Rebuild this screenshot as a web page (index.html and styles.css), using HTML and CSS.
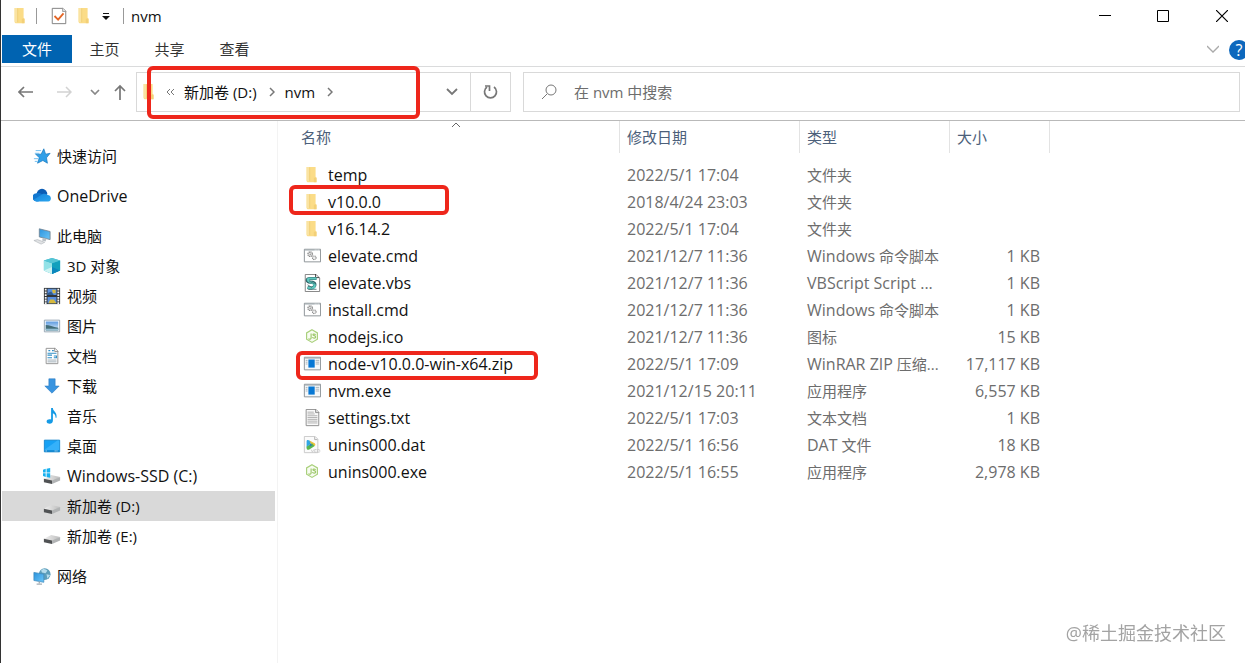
FILE: index.html
```html
<!DOCTYPE html>
<html lang="zh-CN">
<head>
  <meta charset="UTF-8">
  <title>nvm</title>
  <link rel="stylesheet" href="styles.css">
</head>
<body>
<svg class="sprite" aria-hidden="true">
  <defs>
    <linearGradient id="cloud-fill" x1="0" y1="0" x2="1" y2="1"><stop offset="0" stop-color="#1683dc"/><stop offset="1" stop-color="#2aa5ee"/></linearGradient>
    <linearGradient id="drive-fill"><stop offset="0" stop-color="#f0f0f0"/><stop offset="1" stop-color="#bdbdbd"/></linearGradient>
    <linearGradient id="screen-fill" x1="0" y1="0" x2="1" y2="1"><stop offset="0" stop-color="#2b93dd"/><stop offset="1" stop-color="#6cc6f8"/></linearGradient>
    <linearGradient id="photo-fill" x1="0" y1="0" x2="0" y2="1"><stop offset="0" stop-color="#5d9be0"/><stop offset="1" stop-color="#e4f2fb"/></linearGradient>
  </defs>
  <symbol id="folder" viewBox="0 0 20 20">
    <path d="M4 1h10v11l1 1v5H5l-1-1z" fill="#fbdc87"/>
    <path d="M4 1h3v16H5l-1-1z" fill="#fae3a2"/>
    <path d="M7 1l1 1v15H7z" fill="#f0cf78"/>
    <path d="M12 13h3v5h-3z" fill="#f3d078"/>
  </symbol>
  <symbol id="star" viewBox="0 0 20 20">
    <path d="M12 2l2 6 5-1-4 5 1 6-5-3-6 3 2-6-4-4h6z" fill="#2f9fe8" stroke="#1879bf" stroke-width=".8"/>
    <path d="M3 4h6M2 7h5M1 13h5M2 16h3" stroke="#66b9ee"/>
  </symbol>
  <symbol id="cloud" viewBox="0 0 20 20">
    <path d="M4 8a6 6 0 0 1 12 0l-6 4z" fill="#0b5db5"/>
    <path d="M4 7c4-1 6 1 9 3l-7 6H4A4.500 4.500 0 0 1 4 7z" fill="#1277cf"/>
    <path d="M9 9c3-3 7-1 7 0 5 0 5 7 1 7H4c-2 0-3-1-3-2z" fill="url(#cloud-fill)"/>
  </symbol>
  <symbol id="computer" viewBox="0 0 20 20">
    <path d="M7 2l12 3v9L7 11z" fill="url(#screen-fill)" stroke="#73818d" stroke-width=".9"/>
    <path d="M11 12l4 1-1 3-4-1z" fill="#b8bec3"/>
    <path d="M1 15l4-1 8 3-4 2z" fill="#e1e3e5" stroke="#a5abb0" stroke-width=".6"/>
  </symbol>
  <symbol id="cube" viewBox="0 0 20 20">
    <path d="M1 4l9-3 9 3v11l-9 4-9-4z" fill="#39b3cc"/>
    <path d="M1 4l9 3v12l-9-4z" fill="#93e2e7"/>
    <path d="M10 7l9-3v11l-9 4z" fill="#12a0bd"/>
    <path d="M1 4l9-3 9 3-9 3z" fill="#55c5d5"/>
    <path d="M1 15l9-4v8z" fill="#cdf3f2"/><path d="M10 11l9 4-9 4z" fill="#0b87bd"/>
  </symbol>
  <symbol id="film" viewBox="0 0 20 20">
    <path d="M1 1h18v18H1z" fill="#303438"/>
    <path d="M5 2h10v7H5zM5 11h10v7H5z" fill="#5a8fdd"/>
    <path d="M10 3h4v4h-3zM8 14h4l3 4H6z" fill="#d6b93e"/><path d="M5 7l4-2 3 4H5z" fill="#315d91"/>
    <path d="M3 2v17M17 2v17" stroke="#f5f5f5" stroke-width="2" stroke-dasharray="2 1"/>
  </symbol>
  <symbol id="picture" viewBox="0 0 20 20">
    <path d="M1.500 3.500h17v13h-17z" fill="#fff" stroke="#8fa0ae"/>
    <path d="M3 5h14v10H3z" fill="url(#photo-fill)"/>
    <path d="M3 9c4 0 8 2 14 3v3H3z" fill="#426d78"/><path d="M3 13h14v2H3z" fill="#93bed3"/>
  </symbol>
  <symbol id="document" viewBox="0 0 20 20">
    <path d="M3.500 1.500h10l3 3v14h-13z" fill="#fff" stroke="#8d8d8d"/>
    <path d="M13 1v4h4" fill="none" stroke="#8d8d8d"/>
    <path d="M6 4h2M10 4h2M5 7h10M5 9h5M12 10h3v2h-3M5 12h5" fill="none" stroke="#318fc5" stroke-width="1.200"/>
    <path d="M5 14.500h10M5 16.500h10" stroke="#9aa9b2"/>
  </symbol>
  <symbol id="download" viewBox="0 0 20 20"><path d="M6.500 2h7v8H18l-8 8-8-8h4.500z" fill="#3994e0" stroke="#2778bd" stroke-width=".6"/></symbol>
  <symbol id="music" viewBox="0 0 20 20">
    <path d="M9 1h2c0 4 5 4 4 11h-1c0-3-1-4-3-5v8c0 5-7 4-7 1 0-2 3-3 5-2z" fill="#159ae5"/>
  </symbol>
  <symbol id="desktop" viewBox="0 0 20 20">
    <path d="M1.500 3.500h17v13h-17z" fill="#17a1f4" stroke="#1385cc"/>
    <path d="M2 14L16 4h2v11H2z" fill="#35b1fa"/><path d="M2 15.500h16" stroke="#0776bb"/>
    <path d="M3 15.500h1M13 15.500h4" stroke="#fff" stroke-dasharray="1 1"/>
  </symbol>
  <symbol id="drive" viewBox="0 0 20 20">
    <path d="M1 13l8-4 10 2-9 5z" fill="url(#drive-fill)"/>
    <path d="M1 13l9 2v4l-9-2z" fill="#505254"/><path d="M10 15l9-4v4l-9 4z" fill="#b1b3b4"/>
  </symbol>
  <symbol id="system-drive" viewBox="0 0 20 20">
    <use href="#drive"/>
    <path d="M0 3l3-1v4H0zM4 2l4-1v5H4zM0 7h3v4l-3-1zM4 7h4v5l-4-1z" fill="#17b0ef"/>
  </symbol>
  <symbol id="network" viewBox="0 0 20 20">
    <circle cx="13" cy="8" r="6.500" fill="#5d9eba"/>
    <path d="M9 4c2-3 5-2 7 0l-2 3-4-1zM15 8l4 1-3 4z" fill="#b5dced"/>
    <path d="M1 6l11 2v9L1 15z" fill="url(#screen-fill)" stroke="#3f88bb" stroke-width=".8"/>
    <path d="M7 16v2m-3 1l6 0" stroke="#a7afb5" stroke-width="1.500"/>
  </symbol>
  <symbol id="script" viewBox="0 0 20 20">
    <path d="M1.500 2.500h18v14h-18z" fill="#fff" stroke="#848b90"/>
    <path d="M2 3.500h17" stroke="#a9b1b6"/><path d="M13 3.500h5" stroke="#fff" stroke-dasharray="1 1"/>
    <circle cx="8" cy="8" r="2.500" fill="#eee" stroke="#878787" stroke-width="1.500" stroke-dasharray="1.200 .6"/><circle cx="8" cy="8" r=".8" fill="#888"/>
    <circle cx="12.500" cy="12" r="2" fill="#eee" stroke="#8c8c8c" stroke-width="1.200" stroke-dasharray="1 .5"/>
  </symbol>
  <symbol id="vbs" viewBox="0 0 20 20">
    <path d="M2.500.5h12l4 4v15h-16z" fill="#fff" stroke="#777"/><path d="M14 0v4h4" fill="none" stroke="#333"/>
    <path d="M15 5H8C3 5 4 9 8 9s6 1 5 4-5 3-8 2" fill="none" stroke="#31676b" stroke-width="3.400"/>
    <path d="M15 5H8C4 5 5 8 8 9s5 1 5 4-5 3-8 2" fill="none" stroke="#5fc9bf" stroke-width="2.400"/>
    <path d="M5 12l5 3M7 8l6 3M6 17h9" stroke="#315f62" stroke-width=".8"/>
  </symbol>
  <symbol id="node" viewBox="0 0 20 20">
    <path d="M10 2l6 3.500v7L10 16l-6-3.500v-7z" fill="#f8fcf2" stroke="#a9d07b" stroke-width="1.300"/>
    <path d="M9 6v5c0 1-1 2-3 1M14 7.500c-1-1-3-1-3 0s3 .8 3 2.500-3 1.500-3.500.2" fill="none" stroke="#97c461" stroke-width="1.200"/>
  </symbol>
  <symbol id="program" viewBox="0 0 20 20">
    <path d="M1.500 2.500h18v14h-18z" fill="#f6f8f9" stroke="#858c92"/><path d="M2 3.500h17" stroke="#a0a8ae"/>
    <path d="M6 5h7v9H6z" fill="#0878d4"/>
    <path d="M3 6h2M3 8h2M3 10h2M14 6h4M14 8h4M14 10h4" stroke="#a4aeb5"/>
  </symbol>
  <symbol id="text-file" viewBox="0 0 20 20">
    <path d="M3.500.5h11l3 3v15h-14z" fill="#fafafa" stroke="#888"/><path d="M14 0v4h4" fill="#ddd" stroke="#888"/>
    <path d="M5 3.500h7M5 5.500h8M5 7.500h11M5 9.500h11M5 11.500h11M5 13.500h11M5 15.500h11" stroke="#aaa"/>
  </symbol>
  <symbol id="data-file" viewBox="0 0 20 20">
    <path d="M1.500.5h12l3 3v15h-15z" fill="#fbfbfb" stroke="#c5c5c5"/><path d="M13 1v3h3" fill="none" stroke="#aaa"/>
    <path d="M4 6c0-2 2-2 3-1l3 2-6 6z" fill="#31a6e5"/><path d="M7 5l6 3c1 1 1 2 0 3l-4-2z" fill="#efc13c"/><path d="M4 12l6-4 3 3-6 4c-2 1-3 0-3-2z" fill="#5ab64e"/>
    <path d="M7.500 8v4l3-2z" fill="#2b7fb5"/>
    <path d="M9 15l1.500 3 1.500-3M15 15h-2v3h2M16 15v3h2l1-1-1-2z" fill="none" stroke="#c4c4c4" stroke-width=".8"/>
  </symbol>
</svg>

<header>
  <div class="title-bar">
    <svg class="icon"><use href="#folder"/></svg>
    <span class="divider"></span>
    <button class="quick-button properties" aria-label="属性">
      <svg class="icon" viewBox="0 0 20 20"><path d="M2.500 1.500h12l3 3v14h-15z" fill="#fff" stroke="#777"/><path d="M14 1v4h4" fill="#ddd" stroke="#999"/><path d="M5 10l4 4 6-7" fill="none" stroke="#e36627" stroke-width="2"/></svg>
    </button>
    <button class="quick-button" aria-label="新建文件夹"><svg class="icon"><use href="#folder"/></svg></button>
    <button class="more" aria-label="自定义快速访问工具栏">
      <svg width="8" height="8" viewBox="0 0 8 8"><path d="M1 1.500h6" stroke="#111"/><path d="M0 4h8L4 8z" fill="#111"/></svg>
    </button>
    <span class="divider"></span>
    <h1>nvm</h1>
    <div class="window-buttons">
      <button aria-label="最小化"><svg width="12" height="12"><path d="M0 5.500h12" stroke="#000"/></svg></button>
      <button aria-label="最大化"><svg width="12" height="12"><path d="M.5.5h11v11H.5z" fill="none" stroke="#000"/></svg></button>
      <button aria-label="关闭"><svg width="12" height="12"><path d="M0 0l12 12M12 0L0 12" stroke="#000" stroke-width="1.200"/></svg></button>
    </div>
  </div>

  <div class="tabs">
    <button class="tab active">文件</button>
    <button class="tab">主页</button>
    <button class="tab">共享</button>
    <button class="tab">查看</button>
    <button class="expand" aria-label="展开功能区"><svg width="12" height="8"><path d="M0 1l6 6 6-6" fill="none" stroke="#aaa" stroke-width="1.300"/></svg></button>
    <button class="help" aria-label="帮助">?</button>
  </div>

  <div class="toolbar">
    <button class="nav-button" aria-label="返回"><svg width="16" height="12"><path d="M15 6H1M6 1L1 6l5 5" fill="none" stroke="#777" stroke-width="1.700"/></svg></button>
    <button class="nav-button" aria-label="前进" disabled><svg width="16" height="12"><path d="M1 6h14M10 1l5 5-5 5" fill="none" stroke="#d2d2d2" stroke-width="1.500"/></svg></button>
    <button class="nav-button recent" aria-label="最近浏览的位置"><svg width="10" height="6"><path d="M1 1l4 4 4-4" fill="none" stroke="#888" stroke-width="1.700"/></svg></button>
    <button class="nav-button up" aria-label="向上"><svg width="14" height="16"><path d="M7 16V2M2 7l5-5 5 5" fill="none" stroke="#777" stroke-width="1.700"/></svg></button>
    <div class="address">
      <svg class="icon"><use href="#folder"/></svg>
      <nav class="crumbs" aria-label="路径">
        <svg width="8" height="8"><path d="M4 1L1 4l3 3M8 1L5 4l3 3" fill="none" stroke="#777"/></svg>
        <a href="#">新加卷 (D:)</a>
        <svg class="arrow" width="6" height="10"><path d="M1 1l4 4-4 4" fill="none" stroke="#777" stroke-width="1.500"/></svg>
        <a href="#">nvm</a>
        <svg class="arrow" width="6" height="10"><path d="M1 1l4 4-4 4" fill="none" stroke="#777" stroke-width="1.500"/></svg>
      </nav>
      <button class="history" aria-label="以前的位置"><svg width="12" height="8"><path d="M1 1l5 5 5-5" fill="none" stroke="#777" stroke-width="1.800"/></svg></button>
      <button class="refresh" aria-label="刷新"><svg width="16" height="16"><path d="M11 3a6 6 0 1 1-7 0" fill="none" stroke="#777" stroke-width="1.700"/><path d="M2 2h4.500v5" fill="none" stroke="#777" stroke-width="1.700"/></svg></button>
      <span class="mark mark-address"></span>
    </div>
    <label class="search">
      <svg width="16" height="16"><circle cx="10" cy="6" r="5" fill="none" stroke="#777"/><path d="M6 10l-5 5" stroke="#777"/></svg>
      <input type="search" placeholder="在 nvm 中搜索" aria-label="在 nvm 中搜索">
    </label>
  </div>
</header>

<div class="content">
  <aside>
    <a class="place" href="#"><svg class="icon"><use href="#star"/></svg>快速访问</a>
    <a class="place latin" href="#"><svg class="icon"><use href="#cloud"/></svg>OneDrive</a>
    <div class="group">
      <a class="place" href="#"><svg class="icon"><use href="#computer"/></svg>此电脑</a>
      <a class="place child" href="#"><svg class="icon"><use href="#cube"/></svg>3D 对象</a>
      <a class="place child" href="#"><svg class="icon"><use href="#film"/></svg>视频</a>
      <a class="place child" href="#"><svg class="icon"><use href="#picture"/></svg>图片</a>
      <a class="place child" href="#"><svg class="icon"><use href="#document"/></svg>文档</a>
      <a class="place child" href="#"><svg class="icon"><use href="#download"/></svg>下载</a>
      <a class="place child" href="#"><svg class="icon"><use href="#music"/></svg>音乐</a>
      <a class="place child" href="#"><svg class="icon"><use href="#desktop"/></svg>桌面</a>
      <a class="place child latin" href="#"><svg class="icon"><use href="#system-drive"/></svg>Windows-SSD (C:)</a>
      <a class="place child selected" href="#"><svg class="icon"><use href="#drive"/></svg>新加卷 (D:)</a>
      <a class="place child" href="#"><svg class="icon"><use href="#drive"/></svg>新加卷 (E:)</a>
    </div>
    <a class="place" href="#"><svg class="icon"><use href="#network"/></svg>网络</a>
  </aside>

  <main>
    <table>
      <colgroup><col class="col-name"><col class="col-date"><col class="col-type"><col class="col-size"></colgroup>
      <thead>
        <tr>
          <th>名称<svg class="sort" width="10" height="6"><path d="M1 5l4-4 4 4" fill="none" stroke="#666"/></svg></th>
          <th>修改日期</th><th>类型</th><th>大小</th>
        </tr>
      </thead>
      <tbody>
        <tr><td><div class="file"><svg class="icon"><use href="#folder"/></svg>temp</div></td><td>2022/5/1 17:04</td><td>文件夹</td><td></td></tr>
        <tr><td><div class="file"><svg class="icon"><use href="#folder"/></svg>v10.0.0<span class="mark mark-folder"></span></div></td><td>2018/4/24 23:03</td><td>文件夹</td><td></td></tr>
        <tr><td><div class="file"><svg class="icon"><use href="#folder"/></svg>v16.14.2</div></td><td>2022/5/1 17:04</td><td>文件夹</td><td></td></tr>
        <tr><td><div class="file"><svg class="icon"><use href="#script"/></svg>elevate.cmd</div></td><td>2021/12/7 11:36</td><td><span class="latin">Windows</span> 命令脚本</td><td>1 KB</td></tr>
        <tr><td><div class="file"><svg class="icon"><use href="#vbs"/></svg>elevate.vbs</div></td><td>2021/12/7 11:36</td><td class="latin">VBScript Script ...</td><td>1 KB</td></tr>
        <tr><td><div class="file"><svg class="icon"><use href="#script"/></svg>install.cmd</div></td><td>2021/12/7 11:36</td><td><span class="latin">Windows</span> 命令脚本</td><td>1 KB</td></tr>
        <tr><td><div class="file"><svg class="icon"><use href="#node"/></svg>nodejs.ico</div></td><td>2021/12/7 11:36</td><td>图标</td><td>15 KB</td></tr>
        <tr><td><div class="file"><svg class="icon"><use href="#program"/></svg>node-v10.0.0-win-x64.zip<span class="mark mark-zip"></span></div></td><td>2022/5/1 17:09</td><td><span class="latin">WinRAR ZIP</span> 压缩...</td><td>17,117 KB</td></tr>
        <tr><td><div class="file"><svg class="icon"><use href="#program"/></svg>nvm.exe</div></td><td>2021/12/15 20:11</td><td>应用程序</td><td>6,557 KB</td></tr>
        <tr><td><div class="file"><svg class="icon"><use href="#text-file"/></svg>settings.txt</div></td><td>2022/5/1 17:03</td><td>文本文档</td><td>1 KB</td></tr>
        <tr><td><div class="file"><svg class="icon"><use href="#data-file"/></svg>unins000.dat</div></td><td>2022/5/1 16:56</td><td><span class="latin">DAT</span> 文件</td><td>18 KB</td></tr>
        <tr><td><div class="file"><svg class="icon"><use href="#node"/></svg>unins000.exe</div></td><td>2022/5/1 16:55</td><td>应用程序</td><td>2,978 KB</td></tr>
      </tbody>
    </table>
  </main>
</div>
<div class="watermark">@稀土掘金技术社区</div>
</body>
</html>
```

FILE: styles.css
```css
* {
  box-sizing: border-box;
}
body {
  margin: 0;
  min-height: 100vh;
  display: flex;
  flex-direction: column;
  border-left: 1px solid #333;
  background: #fff;
  color: #111;
  font: 15px/20px "Open Sans", "Noto Sans CJK SC", sans-serif;
  overflow-x: hidden;
}
button, input {
  font: inherit;
  color: inherit;
  border: 0;
  padding: 0;
  background: none;
}
button {
  display: flex;
  align-items: center;
  justify-content: center;
}
a {
  color: inherit;
  text-decoration: none;
}
svg {
  display: block;
  flex-shrink: 0;
}
.sprite {
  position: absolute;
  width: 0;
  height: 0;
}
.icon {
  width: 18px;
  height: 18px;
}
.latin {
  font-size: 16px;
}

/* title bar */
.title-bar {
  display: flex;
  align-items: center;
  height: 35px;
  padding: 0 0 3px 10px;
}
.divider {
  width: 1px;
  height: 16px;
  margin: 0 7px;
  background: #999;
}
.quick-button {
  margin-right: 7px;
}
.properties {
  margin-left: 6px;
}
.more {
  width: 12px;
  margin-right: 4px;
}
.title-bar h1 {
  margin: 0;
  font-size: 15px;
  font-weight: 400;
}
.window-buttons {
  display: flex;
  margin-left: auto;
}
.window-buttons button {
  width: 58px;
  height: 32px;
}
.window-buttons button:last-child {
  width: 53px;
  padding-left: 6px;
}

/* ribbon tabs */
.tabs {
  display: flex;
  height: 32px;
  padding-left: 1px;
  border-bottom: 1px solid #dadbdc;
}
.tab {
  width: 65px;
  height: 28px;
  color: #333;
}
.tab.active {
  width: 70px;
  background: #0063b1;
  color: #fff;
}
.expand {
  width: 24px;
  height: 28px;
  margin-left: auto;
}
.help {
  flex-shrink: 0;
  width: 20px;
  height: 20px;
  margin: 5px -4px 0 4px;
  border-radius: 50%;
  background: #0d68bd;
  color: #fff;
  font-size: 16px;
}

/* address and search */
.toolbar {
  display: flex;
  align-items: center;
  height: 54px;
  padding: 0 5px 4px 12px;
  border-bottom: 1px solid #b9b9b9;
}
.nav-button {
  width: 26px;
  height: 30px;
  margin-right: 12px;
}
.recent {
  width: 20px;
  margin: 0 5px 0 -4px;
}
.up {
  width: 20px;
  margin-right: 6px;
}
.address {
  position: relative;
  display: flex;
  align-items: center;
  flex: 0 1 375px;
  height: 40px;
  margin-right: 12px;
  padding-left: 3px;
  border: 1px solid #d9d9d9;
}
.crumbs {
  display: flex;
  align-items: center;
  flex: 1;
  padding-left: 8px;
  white-space: nowrap;
}
.crumbs a {
  margin-left: 10px;
}
.arrow {
  margin-left: 12px;
}
.history {
  width: 36px;
}
.refresh {
  width: 40px;
  height: 38px;
  border-left: 1px solid #d9d9d9;
}
.search {
  display: flex;
  align-items: center;
  flex: 1;
  height: 40px;
  padding-left: 17px;
  border: 1px solid #d9d9d9;
}
.search input {
  flex: 1;
  margin-left: 17px;
  outline: 0;
}
.search input::placeholder {
  color: #6d6d6d;
}

/* navigation pane */
.content {
  display: flex;
  flex: 1;
}
aside {
  display: flex;
  flex-direction: column;
  gap: 10px;
  width: 277px;
  flex-shrink: 0;
  padding: 20px 2px 20px 1px;
  border-right: 1px solid #f3f3f3;
}
.place {
  display: flex;
  align-items: center;
  gap: 6px;
  height: 30px;
  padding-left: 31px;
}
.place.child {
  padding-left: 41px;
}
.place.selected {
  background: #d9d9d9;
}

/* file list */
main {
  flex: 1;
  padding-left: 15px;
}
table {
  width: 757px;
  table-layout: fixed;
  border-collapse: separate;
  border-spacing: 0;
}
.col-name {
  width: 327px;
}
.col-date {
  width: 180px;
}
.col-type {
  width: 150px;
}
.col-size {
  width: 100px;
}
th {
  position: relative;
  height: 32px;
  padding: 0 7px;
  border-right: 1px solid #e3e3e3;
  color: #4c607a;
  font-weight: 400;
  text-align: left;
}
th:first-child {
  padding-left: 8px;
}
.sort {
  position: absolute;
  top: 1px;
  left: 158px;
}
tbody::before {
  content: "";
  display: block;
  height: 8px;
}
td {
  height: 27px;
  padding: 0 7px;
  color: #6d6d6d;
  white-space: nowrap;
}
td:first-child {
  padding-left: 10px;
  color: #111;
}
td:last-child {
  padding-right: 10px;
  text-align: right;
}
td:first-child, td:nth-child(2), td:last-child {
  font-size: 16px;
}
.file {
  position: relative;
  display: flex;
  align-items: center;
  gap: 7px;
}

/* red annotation frames */
.mark {
  position: absolute;
  border: 4px solid #ee261b;
  border-radius: 6px;
  pointer-events: none;
}
.mark-address {
  top: -7px;
  left: 10px;
  width: 273px;
  height: 53px;
}
.mark-folder {
  top: -7px;
  left: -14px;
  width: 160px;
  height: 30px;
}
.mark-zip {
  top: -3px;
  left: -7px;
  width: 242px;
  height: 29px;
}
.watermark {
  position: fixed;
  right: 19px;
  bottom: 18px;
  color: #a3a3a3;
  font-size: 18px;
  line-height: 24px;
}
```
